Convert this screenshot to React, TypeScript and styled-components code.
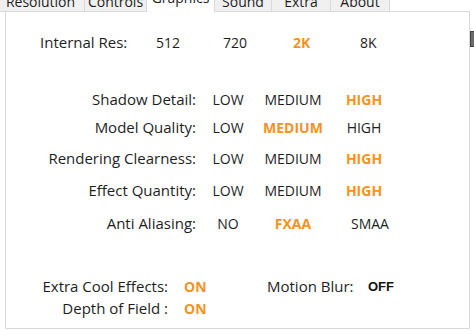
import React from 'react'
import styled, { createGlobalStyle } from 'styled-components'

const GlobalStyle = createGlobalStyle`
    body {
        margin: 0;
        background: #ffffff;
        font-family: "Open Sans", "Noto Sans", sans-serif;
        color: #1e1e1e;
    }
`

const ORANGE = '#f5921e'

interface Option {
    label: string
    active?: boolean
}

interface Setting {
    name: string
    options: Array<Option>
    gap: number
}

const tabs = [
    { name: 'Resolution', width: 89 },
    { name: 'Controls', width: 63 },
    { name: 'Graphics', width: 69, selected: true },
    { name: 'Sound', width: 58 },
    { name: 'Extra', width: 60 },
    { name: 'About', width: 60 },
]

const resolutions: Array<Option> = [
    { label: '512' },
    { label: '720' },
    { label: '2K', active: true },
    { label: '8K' },
]

const settings: Array<Setting> = [
    { name: 'Shadow Detail:', gap: 0, options: [{ label: 'LOW' }, { label: 'MEDIUM' }, { label: 'HIGH', active: true }] },
    { name: 'Model Quality:', gap: 0, options: [{ label: 'LOW' }, { label: 'MEDIUM', active: true }, { label: 'HIGH' }] },
    { name: 'Rendering Clearness:', gap: 3, options: [{ label: 'LOW' }, { label: 'MEDIUM' }, { label: 'HIGH', active: true }] },
    { name: 'Effect Quantity:', gap: 4, options: [{ label: 'LOW' }, { label: 'MEDIUM' }, { label: 'HIGH', active: true }] },
    { name: 'Anti Aliasing:', gap: 5, options: [{ label: 'NO' }, { label: 'FXAA', active: true }, { label: 'SMAA' }] },
]

const GraphicsTab: React.FC = () => {
    return (
        <Page>
            <GlobalStyle />
            <TabBar>
                {tabs.map((tab) => (
                    <Tab key={tab.name} $width={tab.width} $selected={!!tab.selected}>
                        {tab.name}
                    </Tab>
                ))}
            </TabBar>
            <Panel>
                <ResRow>
                    <ResLabel>Internal Res:</ResLabel>
                    {resolutions.map((res) => (
                        <Value key={res.label} $active={!!res.active}>
                            {res.label}
                        </Value>
                    ))}
                </ResRow>

                <Settings>
                    {settings.map((setting) => (
                        <SettingRow key={setting.name} $gap={setting.gap}>
                            <SettingLabel>{setting.name}</SettingLabel>
                            {setting.options.map((option) => (
                                <Choice
                                    key={option.label}
                                    $active={!!option.active}
                                    $shift={option.label === 'SMAA' ? 12 : 0}
                                >
                                    {option.label}
                                </Choice>
                            ))}
                        </SettingRow>
                    ))}
                </Settings>

                <Toggles>
                    <ToggleLabel>Extra Cool Effects:</ToggleLabel>
                    <ToggleValue>ON</ToggleValue>
                    <SideLabel>Motion Blur:</SideLabel>
                    <Off>OFF</Off>
                    <ToggleLabel>Depth of Field :</ToggleLabel>
                    <ToggleValue>ON</ToggleValue>
                </Toggles>
            </Panel>
            <EdgeMark />
        </Page>
    )
}

export default function App() {
    return <GraphicsTab />
}

const Page = styled.div`
    position: relative;
    width: 474px;
    height: 335px;
    overflow: hidden;
    background: #ffffff;
`

const TabBar = styled.div`
    display: flex;
    height: 20px;
    margin-top: -8px;
    margin-left: -4px;
    position: relative;
    z-index: 1;
`

const Tab = styled.div<{ $width: number; $selected: boolean }>`
    width: ${(p) => p.$width}px;
    height: ${(p) => (p.$selected ? 22 : 20)}px;
    margin-top: ${(p) => (p.$selected ? -2 : 0)}px;
    padding-top: ${(p) => (p.$selected ? 0 : 2)}px;
    box-sizing: border-box;
    border: 1px solid #d9d9d9;
    border-bottom: ${(p) => (p.$selected ? 'none' : '1px solid #d9d9d9')};
    margin-right: -1px;
    background: ${(p) => (p.$selected ? '#ffffff' : '#f0f0f0')};
    font-size: 14px;
    line-height: 14px;
    text-align: center;
    color: #1e1e1e;
`

const Panel = styled.div`
    margin: -1px 4px 0 5px;
    height: 318px;
    box-sizing: border-box;
    border: 1px solid #d9d9d9;
    position: relative;
    padding-top: 18px;
`

const ResRow = styled.div`
    display: grid;
    grid-template-columns: 116px 67px 70px 67px 40px;
    padding-left: 34px;
    height: 24px;
    align-items: center;
`

const ResLabel = styled.span`
    font-size: 15px;
`

const Value = styled.span<{ $active?: boolean }>`
    font-size: 14px;
    font-weight: ${(p) => (p.$active ? 700 : 400)};
    color: ${(p) => (p.$active ? ORANGE : '#1e1e1e')};
`

const Settings = styled.div`
    margin-top: 31px;
    display: flex;
    flex-direction: column;
`

const SettingRow = styled.div<{ $gap: number }>`
    display: grid;
    grid-template-columns: 190px 64px 66px 76px;
    height: 28px;
    margin-top: ${(p) => p.$gap}px;
    align-items: center;
`

const SettingLabel = styled.span`
    text-align: right;
    font-size: 15px;
`

const Choice = styled.span<{ $active: boolean; $shift: number }>`
    text-align: center;
    padding-left: ${(p) => p.$shift}px;
    font-size: 14px;
    font-weight: ${(p) => (p.$active ? 700 : 400)};
    color: ${(p) => (p.$active ? ORANGE : '#1e1e1e')};
`

const Toggles = styled.div`
    margin-top: 38px;
    display: grid;
    grid-template-columns: 162px 99px 101px auto;
    grid-auto-rows: 22px;
    align-items: center;
`

const ToggleLabel = styled.span`
    text-align: right;
    font-size: 15px;
`

const SideLabel = styled.span`
    font-size: 15px;
`

const ToggleValue = styled.span`
    padding-left: 16px;
    font-size: 14px;
    font-weight: 700;
    color: ${ORANGE};
`

const Off = styled.span`
    font-family: "Liberation Sans", Arial, sans-serif;
    font-weight: 700;
    font-size: 13px;
    color: #111111;
`

const EdgeMark = styled.div`
    position: absolute;
    right: -4px;
    top: 31px;
    width: 6px;
    height: 14px;
    background: #6b6b6b;
    border: 1px solid #444;
`
